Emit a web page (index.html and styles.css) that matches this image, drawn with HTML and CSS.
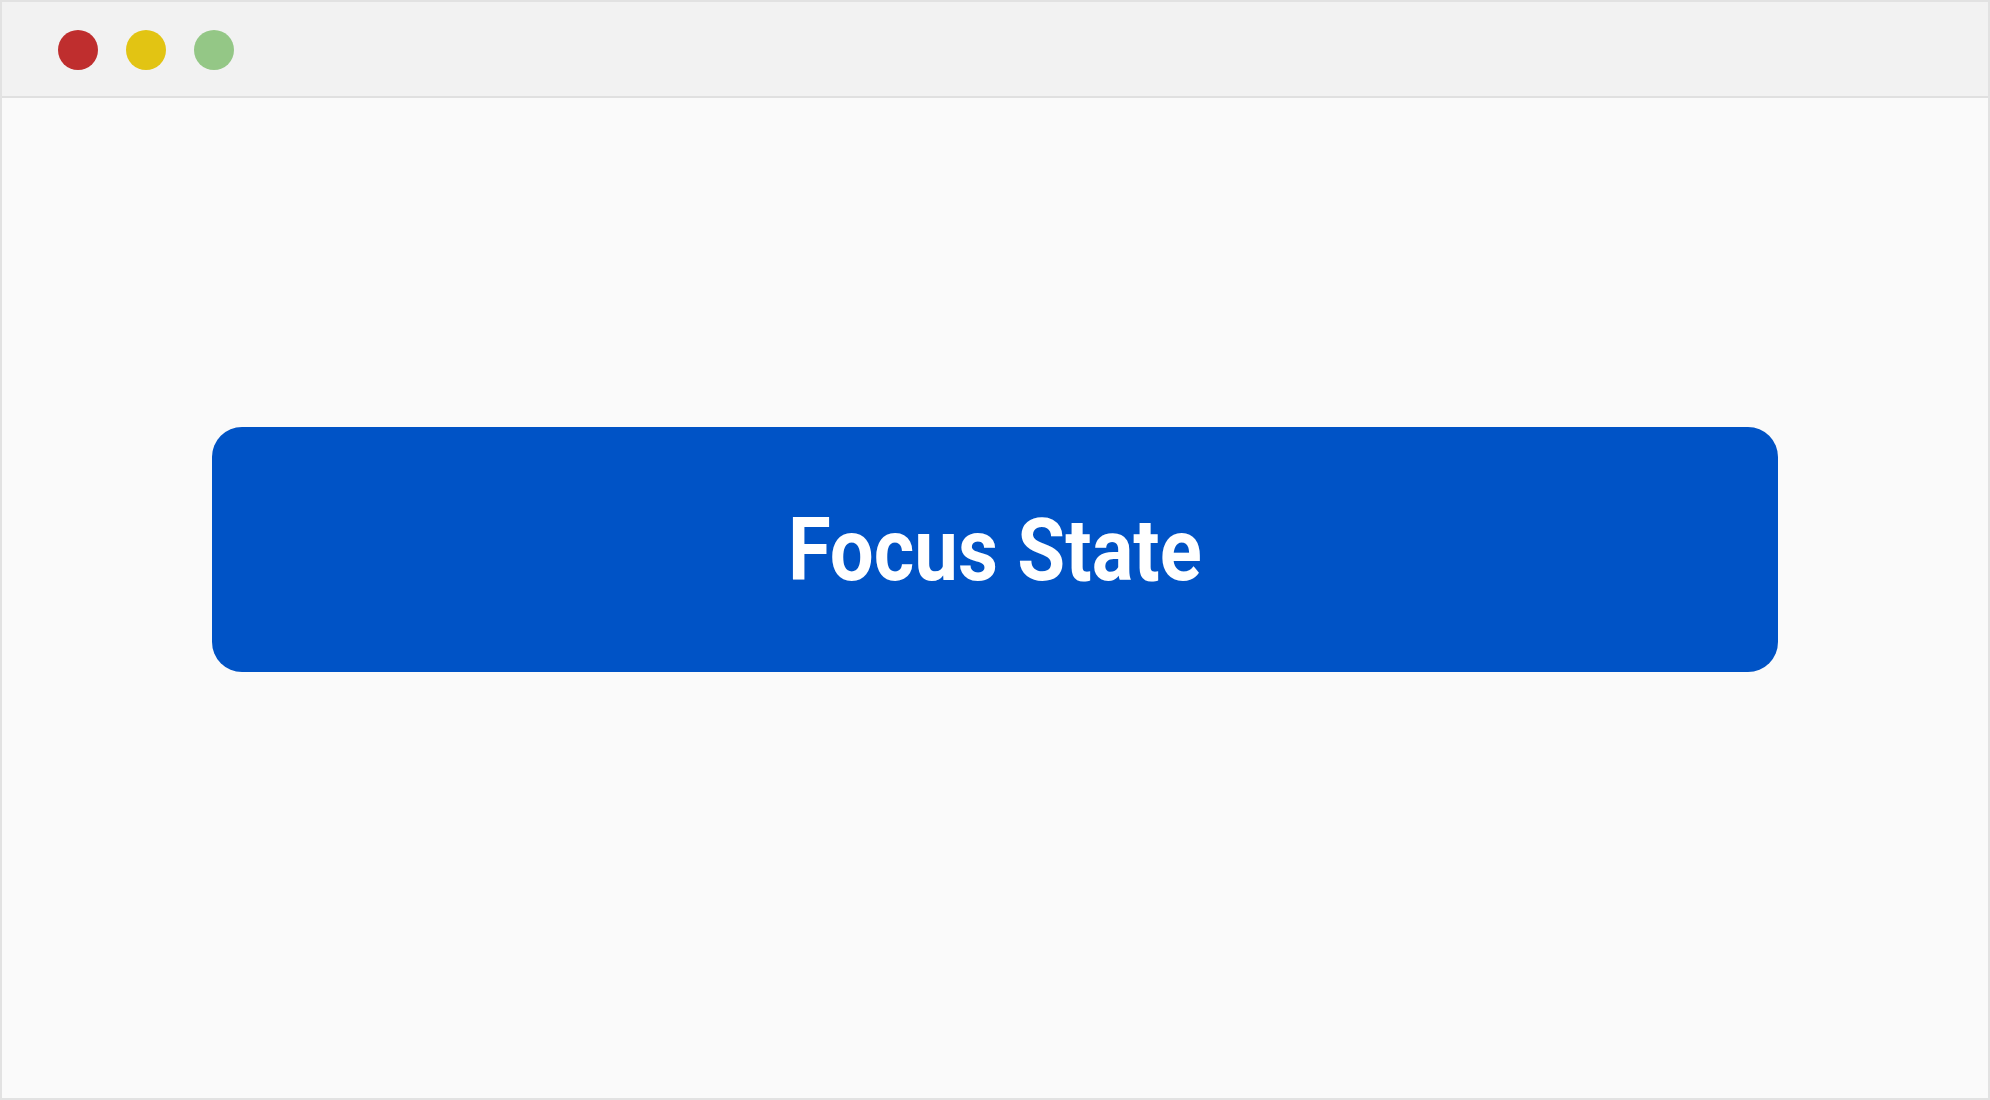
FILE: index.html
```html
<!DOCTYPE html>
<html lang="en">
<head>
<meta charset="utf-8">
<title>Focus State</title>
<link rel="stylesheet" href="styles.css">
</head>
<body>
<div class="window">
  <div class="titlebar">
    <span class="dot dot-red"></span>
    <span class="dot dot-yellow"></span>
    <span class="dot dot-green"></span>
  </div>
  <div class="content">
    <button class="focus-btn" type="button"><span class="label">Focus State</span></button>
  </div>
</div>
</body>
</html>
```
FILE: styles.css
```css
html, body {
  margin: 0;
  padding: 0;
  width: 1990px;
  height: 1100px;
  overflow: hidden;
}
body {
  font-family: Roboto, "Liberation Sans", sans-serif;
  background: #fafafa;
}
.window {
  box-sizing: border-box;
  width: 1990px;
  height: 1100px;
  border: 2px solid #e2e2e2;
  display: flex;
  flex-direction: column;
  background: #fafafa;
}
.titlebar {
  box-sizing: border-box;
  height: 96px;
  flex: 0 0 96px;
  background: #f2f2f2;
  border-bottom: 2px solid #e0e0e0;
  display: flex;
  align-items: center;
  padding: 2px 0 0 56px;
  gap: 28px;
}
.dot {
  width: 40px;
  height: 40px;
  border-radius: 50%;
  display: block;
}
.dot-red { background: #bf2e2e; }
.dot-yellow { background: #e2c413; }
.dot-green { background: #94c786; }
.content {
  flex: 1;
  padding: 329px 210px 0;
}
.focus-btn {
  display: flex;
  align-items: center;
  justify-content: center;
  width: 100%;
  height: 245px;
  border: none;
  border-radius: 30px;
  background: #0053c6;
  color: #ffffff;
  font-family: Roboto, "Liberation Sans", sans-serif;
  font-weight: 700;
  font-size: 88px;
  padding: 0;
  margin: 0;
}
.label {
  display: inline-block;
  transform: scaleX(0.885);
  transform-origin: center;
  white-space: nowrap;
}
```
